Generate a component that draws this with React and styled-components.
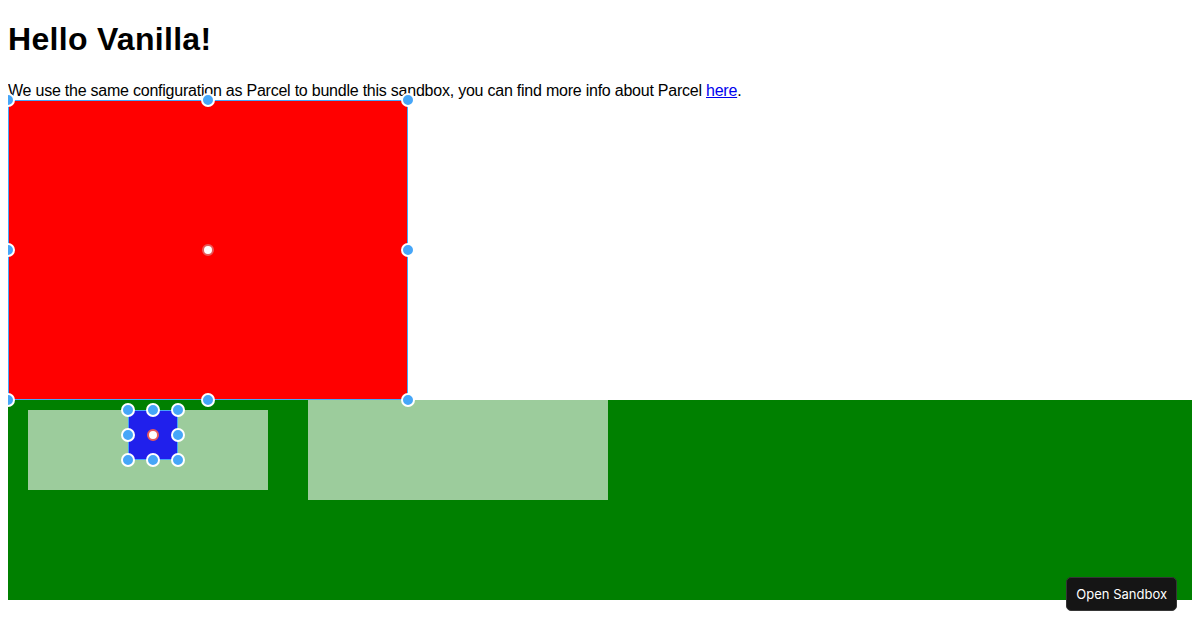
import styled, { createGlobalStyle } from "styled-components"

const GlobalStyle = createGlobalStyle`
    body {
        margin: 8px;
        font-family: "Liberation Sans", Arial, sans-serif;
        background: #ffffff;
        color: #000000;
    }
`

const Title = styled.h1`
    font-size: 32px;
    font-weight: 700;
    letter-spacing: 0.3px;
    margin: 13.44px 0 23.44px;
`

const Intro = styled.p`
    font-size: 16px;
    letter-spacing: -0.23px;
    margin: 0;

    a {
        color: #0000ee;
    }
`

const RedBox = styled.div`
    position: relative;
    width: 400px;
    height: 300px;
    background: #ff0000;
`

const GreenArea = styled.div`
    display: flex;
    align-items: flex-start;
    height: 200px;
    background: #008000;
`

const Panel = styled.div`
    position: relative;
    display: flex;
    align-items: flex-start;
    width: ${p => p.w}px;
    height: ${p => p.h}px;
    margin: ${p => p.m};
    background: #9ccc9c;
`

const BlueBox = styled.div`
    position: relative;
    width: 50px;
    height: 50px;
    margin-left: 100px;
    background: #2020ec;
`

const Frame = styled.div`
    position: absolute;
    inset: 0;
    border: 1px solid #46a6f8;
    pointer-events: none;
    z-index: 2;
`

const Handle = styled.span`
    position: absolute;
    left: ${p => p.x}%;
    top: ${p => p.y}%;
    width: 14px;
    height: 14px;
    box-sizing: border-box;
    border-radius: 50%;
    background: #46a6f8;
    border: 2px solid #ffffff;
    transform: translate(-50%, -50%);
    z-index: 3;
`

const Origin = styled.span`
    position: absolute;
    left: 50%;
    top: 50%;
    width: 12px;
    height: 12px;
    box-sizing: border-box;
    border-radius: 50%;
    background: #ffffff;
    border: 2px solid #e85a5a;
    transform: translate(-50%, -50%);
    z-index: 3;
`

const SandboxButton = styled.button`
    position: fixed;
    right: 23px;
    bottom: 19px;
    height: 34px;
    padding: 0 9px;
    background: #151515;
    color: #ffffff;
    border: 1px solid #363636;
    border-radius: 5px;
    font-family: Inter, "Liberation Sans", sans-serif;
    font-size: 13px;
    cursor: pointer;
`

const spots = [
    [0, 0], [50, 0], [100, 0],
    [0, 50], [100, 50],
    [0, 100], [50, 100], [100, 100],
]

function Selection() {
    return (
        <>
            <Frame />
            {spots.map(([x, y]) => (
                <Handle key={`${x}-${y}`} x={x} y={y} />
            ))}
            <Origin />
        </>
    )
}

export default function App() {
    return (
        <>
            <GlobalStyle />
            <Title>Hello Vanilla!</Title>
            <Intro>
                We use the same configuration as Parcel to bundle this sandbox, you can find more info about Parcel <a href="#">here</a>.
            </Intro>
            <RedBox>
                <Selection />
            </RedBox>
            <GreenArea>
                <Panel w={240} h={80} m="10px 0 0 20px">
                    <BlueBox>
                        <Selection />
                    </BlueBox>
                </Panel>
                <Panel w={300} h={100} m="0 0 0 40px" />
            </GreenArea>
            <SandboxButton>Open Sandbox</SandboxButton>
        </>
    )
}
